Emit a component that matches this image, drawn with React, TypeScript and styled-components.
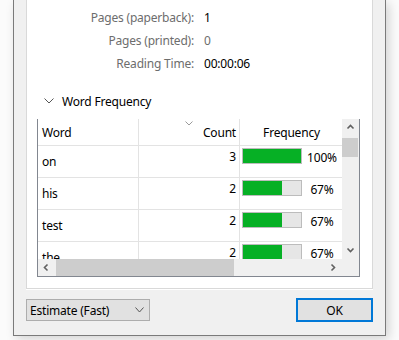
import React from 'react';
import styled, { createGlobalStyle } from 'styled-components';

const GlobalStyle = createGlobalStyle`
  html, body {
    margin: 0;
    padding: 0;
    background: #fbfbfb;
  }
  body {
    font-family: "Noto Sans", "Liberation Sans", sans-serif;
    font-size: 12px;
    letter-spacing: -0.2px;
    color: #000;
  }
`;

const Stage = styled.div`
  width: 399px;
  height: 340px;
  overflow: hidden;
  padding-left: 13px;
  box-sizing: border-box;
`;

const Window = styled.div`
  width: 373px;
  height: 336px;
  box-sizing: border-box;
  border: 1px solid #7a7a7a;
  border-top: none;
  background: #f0f0f0;
  box-shadow: 3px 3px 10px rgba(0, 0, 0, 0.16);
  padding: 0 12px;
  display: flex;
  flex-direction: column;
`;

const Panel = styled.div`
  height: 289px;
  box-sizing: border-box;
  background: #fff;
  border: 1px solid #d9d9d9;
  border-top: none;
  box-shadow: 0 1px 0 #fff;
  display: flex;
  flex-direction: column;
`;

const InfoGrid = styled.div`
  display: grid;
  grid-template-columns: 167px auto;
  column-gap: 10px;
  padding-top: 6px;
  line-height: 23px;
`;

const InfoLabel = styled.div`
  text-align: right;
  color: #6d6d6d;
`;

const InfoValue = styled.div<{ $muted?: boolean }>`
  color: ${p => (p.$muted ? '#6d6d6d' : '#000')};
`;

const SectionHeader = styled.div`
  margin-top: 16px;
  height: 20px;
  display: flex;
  align-items: center;
  padding-left: 17px;
  gap: 8px;
`;

const ListBox = styled.div`
  margin: 8px 0 0 10px;
  width: 323px;
  height: 158px;
  box-sizing: border-box;
  border: 1px solid #828790;
  border-top: none;
  display: grid;
  grid-template-columns: 304px 17px;
  grid-template-rows: 140px 17px;
`;

const Viewport = styled.div`
  overflow: hidden;
  background: #fff;
`;

const Row = styled.div<{ $header?: boolean }>`
  display: grid;
  grid-template-columns: 101px 101px 102px;
  height: ${p => (p.$header ? 27 : 32)}px;
  box-sizing: border-box;
  border-bottom: 1px solid #e3e3e3;
`;

const Cell = styled.div<{ $align?: 'left' | 'right' | 'center'; $top?: boolean }>`
  position: relative;
  display: flex;
  box-sizing: border-box;
  border-right: 1px solid #e3e3e3;
  align-items: ${p => (p.$top ? 'flex-start' : 'center')};
  justify-content: ${p =>
    p.$align === 'right' ? 'flex-end' : p.$align === 'center' ? 'center' : 'flex-start'};
  padding: ${p => (p.$top ? '2px 3px 0 4px' : '0 3px 0 4px')};
  white-space: nowrap;
  &:last-child {
    border-right: none;
  }
`;

const SortMark = styled.svg`
  position: absolute;
  top: 2px;
  left: 46px;
`;

const FreqCell = styled.div`
  display: flex;
  align-items: flex-start;
  padding: 2px 0 0 2px;
`;

const Bar = styled.div`
  width: 60px;
  height: 16px;
  box-sizing: border-box;
  border: 1px solid #bcbcbc;
  background: #e6e6e6;
  flex: none;
`;

const BarFill = styled.div`
  height: 100%;
  background: #06b025;
`;

const Percent = styled.div`
  flex: 1;
  text-align: center;
  line-height: 20px;
`;

const VScroll = styled.div`
  background: #f0f0f0;
  display: flex;
  flex-direction: column;
`;

const HScroll = styled.div`
  background: #f0f0f0;
  display: flex;
  align-items: stretch;
`;

const ArrowBtn = styled.div`
  width: 17px;
  height: 17px;
  flex: none;
  display: flex;
  align-items: center;
  justify-content: center;
`;

const VTrack = styled.div`
  flex: 1;
  padding: 2px 1px 0 0;
`;

const VThumb = styled.div`
  height: 19px;
  background: #cdcdcd;
`;

const HTrack = styled.div`
  flex: 1;
  padding: 0 0 0 1px;
`;

const HThumb = styled.div`
  width: 178px;
  height: 100%;
  background: #cdcdcd;
`;

const Corner = styled.div`
  background: #f0f0f0;
`;

const Footer = styled.div`
  margin-top: 9px;
  height: 24px;
  display: flex;
  align-items: center;
`;

const Dropdown = styled.div`
  width: 124px;
  height: 22px;
  box-sizing: border-box;
  border: 1px solid #adadad;
  background: #e1e1e1;
  display: flex;
  align-items: center;
  justify-content: space-between;
  padding: 0 5px 0 3px;
`;

const OkButton = styled.div`
  margin-left: auto;
  width: 77px;
  height: 24px;
  box-sizing: border-box;
  border: 2px solid #0078d7;
  background: #e1e1e1;
  display: flex;
  align-items: center;
  justify-content: center;
`;

const Chevron = ({ dir, color = '#606060' }: { dir: 'up' | 'down' | 'left' | 'right'; color?: string }) => {
  const d = {
    up: 'M1.5 5.5 L4.5 2.5 L7.5 5.5',
    down: 'M1.5 2.5 L4.5 5.5 L7.5 2.5',
    left: 'M5.5 1.5 L2.5 4.5 L5.5 7.5',
    right: 'M2.5 1.5 L5.5 4.5 L2.5 7.5',
  }[dir];
  return (
    <svg width="9" height="9" viewBox="0 0 9 9">
      <path d={d} fill="none" stroke={color} strokeWidth="1.6" />
    </svg>
  );
};

const ThinChevron = ({ w, h, color }: { w: number; h: number; color: string }) => (
  <svg width={w} height={h + 1} viewBox={`0 0 ${w} ${h + 1}`}>
    <path d={`M0.5 0.5 L${w / 2} ${h} L${w - 0.5} 0.5`} fill="none" stroke={color} strokeWidth="1" />
  </svg>
);

const words = [
  { word: 'on', count: 3, pct: 100 },
  { word: 'his', count: 2, pct: 67 },
  { word: 'test', count: 2, pct: 67 },
  { word: 'the', count: 2, pct: 67 },
  { word: 'a', count: 1, pct: 33 },
];

export default function App() {
  return (
    <>
      <GlobalStyle />
      <Stage>
        <Window>
          <Panel>
            <InfoGrid>
              <InfoLabel>Pages (paperback):</InfoLabel>
              <InfoValue>1</InfoValue>
              <InfoLabel>Pages (printed):</InfoLabel>
              <InfoValue $muted>0</InfoValue>
              <InfoLabel>Reading Time:</InfoLabel>
              <InfoValue>00:00:06</InfoValue>
            </InfoGrid>
            <SectionHeader>
              <ThinChevron w={10} h={5} color="#555" />
              <span>Word Frequency</span>
            </SectionHeader>
            <ListBox>
              <Viewport>
                <Row $header>
                  <Cell>Word</Cell>
                  <Cell $align="right">
                    <SortMark width="8" height="5" viewBox="0 0 8 5">
                      <path d="M0.5 0.5 L4 4 L7.5 0.5" fill="none" stroke="#9a9a9a" strokeWidth="1" />
                    </SortMark>
                    Count
                  </Cell>
                  <Cell $align="center">Frequency</Cell>
                </Row>
                {words.map(w => (
                  <Row key={w.word}>
                    <Cell>{w.word}</Cell>
                    <Cell $align="right" $top>
                      {w.count}
                    </Cell>
                    <FreqCell>
                      <Bar>
                        <BarFill style={{ width: `${w.pct}%` }} />
                      </Bar>
                      <Percent>{w.pct}%</Percent>
                    </FreqCell>
                  </Row>
                ))}
              </Viewport>
              <VScroll>
                <ArrowBtn>
                  <Chevron dir="up" />
                </ArrowBtn>
                <VTrack>
                  <VThumb />
                </VTrack>
                <ArrowBtn>
                  <Chevron dir="down" />
                </ArrowBtn>
              </VScroll>
              <HScroll>
                <ArrowBtn>
                  <Chevron dir="left" />
                </ArrowBtn>
                <HTrack>
                  <HThumb />
                </HTrack>
                <ArrowBtn>
                  <Chevron dir="right" />
                </ArrowBtn>
              </HScroll>
              <Corner />
            </ListBox>
          </Panel>
          <Footer>
            <Dropdown>
              <span>Estimate (Fast)</span>
              <ThinChevron w={9} h={5} color="#555" />
            </Dropdown>
            <OkButton>OK</OkButton>
          </Footer>
        </Window>
      </Stage>
    </>
  );
}
